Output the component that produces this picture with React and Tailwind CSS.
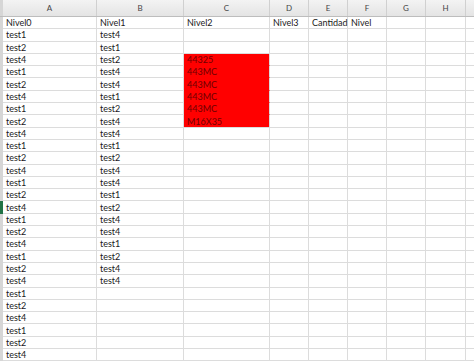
import React from 'react';

const COLS = [
  { key: 'A', w: 'w-[94px]' },
  { key: 'B', w: 'w-[87px]' },
  { key: 'C', w: 'w-[86px]' },
  { key: 'D', w: 'w-[39px]' },
  { key: 'E', w: 'w-[39px]' },
  { key: 'F', w: 'w-[39px]' },
  { key: 'G', w: 'w-[39px]' },
  { key: 'H', w: 'w-[40px]' },
  { key: '', w: 'w-[40px]' },
];

const colA = Array.from({ length: 27 }, (_, i) => ['test1', 'test2', 'test4'][i % 3]);
const colB = Array.from({ length: 21 }, (_, i) => ['test4', 'test1', 'test2', 'test4'][i % 4]);
const colC = { 2: '44325', 3: '443MC', 4: '443MC', 5: '443MC', 6: '443MC', 7: 'M16X35' };

const rows = [
  ['Nivel0', 'Nivel1', 'Nivel2', 'Nivel3', 'Cantidad', 'Nivel', '', '', ''],
  ...colA.map((a, i) => [a, colB[i] || '', colC[i] || '', '', '', '', '', '', '']),
];

function Cell({ col, value, red, redBelow }) {
  return (
    <div
      className={`${col.w} shrink-0 h-full border-r border-b pl-[3px] flex items-center whitespace-nowrap ${
        red
          ? 'bg-[#ff0000] text-[#6e0000] border-r-[#d9d9d9] ' + (redBelow ? 'border-b-[#ff0000]' : 'border-b-[#dcdcdc]')
          : 'border-[#dcdcdc]'
      }`}
    >
      {value}
    </div>
  );
}

export default function App() {
  return (
    <div className="w-[474px] h-[361px] overflow-hidden bg-white text-[9px] text-[#1a1a1a] font-['Lato','Liberation_Sans',sans-serif]">
      {/* column letters */}
      <div className="flex h-[17px] bg-gradient-to-b from-[#f3f3f3] to-[#e4e4e4] border-b border-[#bdbdbd]">
        <div className="w-[3px] shrink-0 bg-[#d6d6d6]" />
        {COLS.map((c, j) => (
          <div
            key={j}
            className={`${c.w} shrink-0 border-r border-[#d0d0d0] flex items-center justify-center text-[8px] text-[#444]`}
          >
            {c.key}
          </div>
        ))}
      </div>
      {rows.map((r, i) => (
        <div key={i} className="flex h-[12.3px] leading-none">
          <div className={`w-[3px] shrink-0 ${i === 15 ? 'bg-[#217346]' : 'bg-[#d6d6d6]'}`} />
          {COLS.map((c, j) => (
            <Cell
              key={j}
              col={c}
              value={r[j]}
              red={j === 2 && i >= 3 && i <= 8}
              redBelow={j === 2 && i >= 3 && i < 8}
            />
          ))}
        </div>
      ))}
    </div>
  );
}
